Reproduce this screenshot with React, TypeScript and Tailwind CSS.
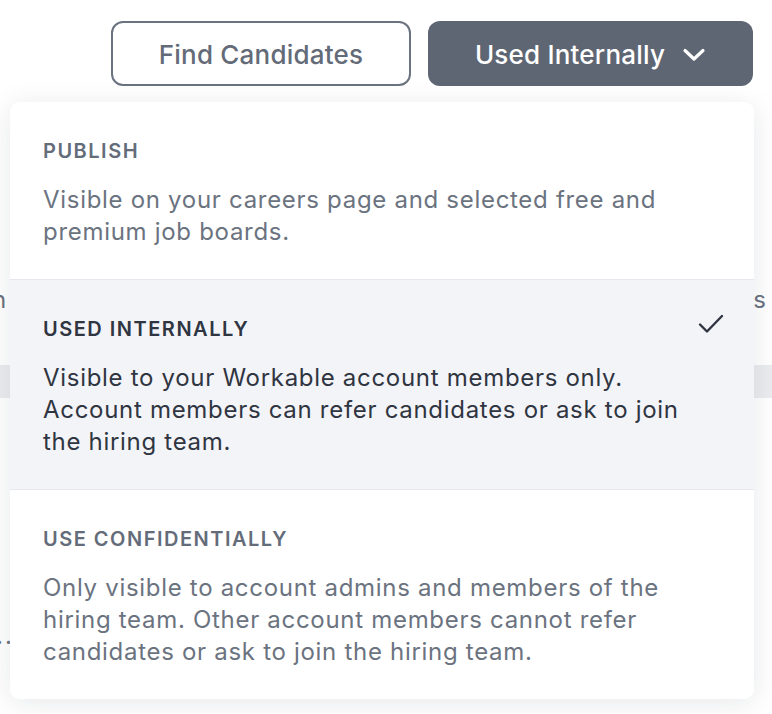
import React from "react";

function Check() {
  return (
    <svg width="26" height="22" viewBox="0 0 26 22" fill="none">
      <path d="M2 11.5 L9 18.5 L24 3" stroke="#2f3541" strokeWidth="2.4" strokeLinecap="round" strokeLinejoin="round" />
    </svg>
  );
}

function Chevron() {
  return (
    <svg width="24" height="16" viewBox="0 0 24 16" fill="none">
      <path d="M3 3.5 L12 12 L21 3.5" stroke="#ffffff" strokeWidth="3.2" strokeLinecap="round" strokeLinejoin="round" />
    </svg>
  );
}

type Opt = { title: string; lines: string[]; selected?: boolean };

const options: Opt[] = [
  { title: "PUBLISH", lines: ["Visible on your careers page and selected free and", "premium job boards."] },
  {
    title: "USED INTERNALLY",
    lines: [
      "Visible to your Workable account members only.",
      "Account members can refer candidates or ask to join",
      "the hiring team.",
    ],
    selected: true,
  },
  {
    title: "USE CONFIDENTIALLY",
    lines: [
      "Only visible to account admins and members of the",
      "hiring team. Other account members cannot refer",
      "candidates or ask to join the hiring team.",
    ],
  },
];

export default function App() {
  return (
    <div className="relative w-[772px] h-[714px] overflow-hidden bg-white font-['Inter',sans-serif]">
      {/* background page */}
      <div className="flex justify-end gap-[17px] pt-[21px] pr-[19px]">
        <button className="w-[300px] h-[65px] rounded-[12px] border-2 border-[#6b7280] bg-white text-[26px] tracking-[0.2px] font-medium text-[#646b78] pt-[2px]">
          Find Candidates
        </button>
        <button className="w-[325px] h-[65px] rounded-[12px] bg-[#5f6673] text-[26px] tracking-[0.2px] font-medium text-white flex items-center justify-center gap-[17px] pt-[2px]">
          <span>Used Internally</span>
          <Chevron />
        </button>
      </div>
      <div className="mt-[194px] h-[85px] flex justify-between items-start pt-[2px] text-[24px] text-[#6b7280]">
        <span className="-ml-[8px]">n</span>
        <span className="mr-[6px]">Applicants</span>
      </div>
      <div className="h-[33px] bg-[#ebecef]" />
      <div className="mt-[226px] text-[24px] text-[#6b7280] leading-none">
        <span className="-ml-[4px] tracking-[2px]">...</span>
      </div>

      {/* dropdown */}
      <div className="absolute left-[10px] top-[102px] w-[744px] rounded-[10px] bg-white shadow-[0_4px_28px_rgba(20,30,50,0.10)] overflow-hidden">
        {options.map((o, i) => (
          <div
            key={o.title}
            className={
              (i > 0 ? "border-t border-[#e6e8ee] " : "") +
              (o.selected ? "bg-[#f3f4f8] " : "bg-white ") +
              "relative pl-[33px] pr-[20px] pt-[35px] pb-[31px]"
            }
          >
            <div
              className={
                "text-[20px] leading-[28px] font-semibold tracking-[1.5px] " +
                (o.selected ? "text-[#2f3541]" : "text-[#646c7a]")
              }
            >
              {o.title}
            </div>
            <div
              className={
                "mt-[19px] text-[24px] leading-[32px] tracking-[0.7px] whitespace-nowrap " +
                (o.selected ? "text-[#2f3541]" : "text-[#6b7380]")
              }
            >
              {o.lines.map((l) => (
                <div key={l}>{l}</div>
              ))}
            </div>
            {o.selected && (
              <div className="absolute right-[30px] top-[33px]">
                <Check />
              </div>
            )}
          </div>
        ))}
      </div>
    </div>
  );
}
